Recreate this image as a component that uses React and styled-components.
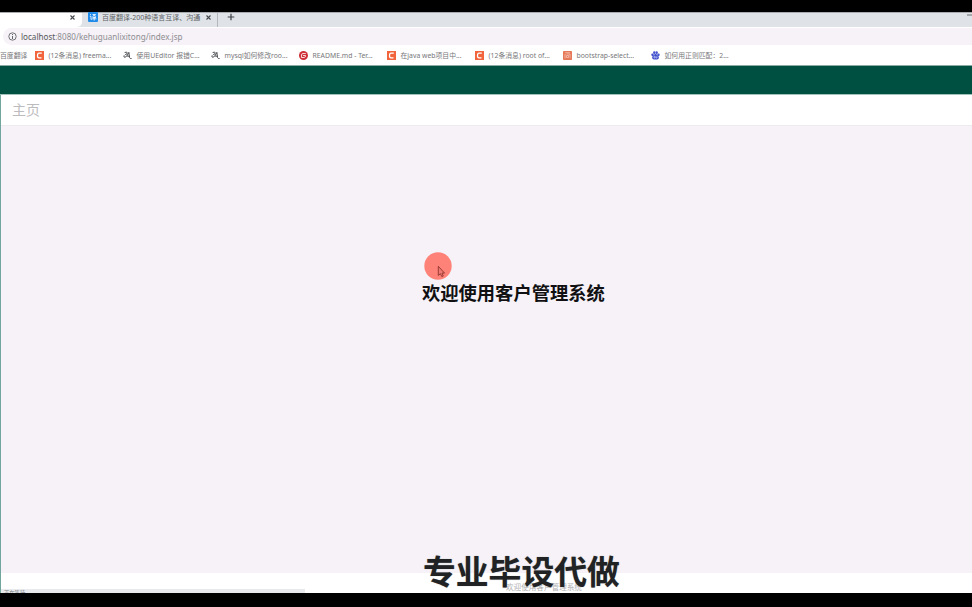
import React from 'react';
import styled, { createGlobalStyle, css } from 'styled-components';

const GlobalStyle = createGlobalStyle`
  body {
    margin: 0;
    background: #000;
    overflow: hidden;
  }

  * {
    box-sizing: border-box;
  }
`;

const Screen = styled.div`
  position: relative;
  display: flex;
  flex-direction: column;
  width: 972px;
  height: 607px;
  padding: 12px 0 14px;
  background: #000;
  overflow: hidden;
  white-space: nowrap;
  font-family: 'Noto Sans', 'Noto Sans CJK SC', sans-serif;
`;

// Browser chrome
const TabStrip = styled.div`
  display: flex;
  flex: none;
  height: 15px;
  background: #dfe3e7;
  border-top: 1px solid #a9acae;
`;

const Tab = styled.div`
  display: flex;
  align-items: center;
  height: 14px;
  padding-bottom: 6px;
  color: #5c6064;
  font-size: 7px;
  line-height: 9px;

  ${({ $active }) => $active ? css`
    width: 82px;
    padding-left: 69px;
    background: #fff;
    border-radius: 0 0 5px 0;
  ` : css`
    width: 136px;
    padding-left: 6px;
    border-right: 1px solid #b4b8bc;
  `}
`;

const TabTitle = styled.span`
  flex: none;
  width: 103px;
  margin-left: 4px;
  overflow: hidden;
`;

const TabIcon = styled.svg`
  flex: none;
  width: ${({ $size }) => $size || 7}px;
  height: ${({ $size }) => $size || 7}px;
`;

const NewTab = styled.div`
  padding: 0 0 0 9px;
  line-height: 0;
`;

const Minimize = styled.div`
  width: 5px;
  height: 2px;
  margin: 1px 0 0 auto;
  background: #a5a8ab;
`;

const AddressRow = styled.div`
  flex: none;
  height: 18px;
  padding: 1px 0 0 3px;
  background: #fff;
`;

const AddressBar = styled.div`
  display: flex;
  align-items: center;
  height: 17px;
  padding-left: 5px;
  background: #f6f2f7;
  border-radius: 9px 0 0 9px;
  color: #8d8d92;
  font-size: 8.1px;
`;

const Url = styled.span`
  margin-left: 4px;
  padding-bottom: 1px;

  b {
    color: #55565a;
    font-weight: 400;
  }
`;

const Bookmarks = styled.div`
  display: flex;
  align-items: center;
  flex: none;
  height: 20px;
  background: #fff;
  color: #77777a;
  font-size: 6.85px;
`;

const Bookmark = styled.div`
  display: flex;
  align-items: center;
  flex: none;
  width: ${({ $width }) => $width || 88}px;

  svg {
    flex: none;
    width: 9px;
    height: 9px;
    margin-right: 4.5px;
  }
`;

// Page inside the browser
const Page = styled.div`
  display: flex;
  flex: 1;
  flex-direction: column;
  min-height: 0;
  border-left: 1px solid #70a69d;
`;

const Banner = styled.header`
  flex: none;
  height: 30px;
  margin-left: -1px;
  background: #005041;
  border-top: 1px solid #8caaa4;
  border-bottom: 1px solid #9fc3bb;
`;

const Crumb = styled.div`
  flex: none;
  height: 31px;
  padding-left: 11px;
  background: #fff;
  border-bottom: 1px solid #ececee;
  color: #bcbcbe;
  font-size: 14px;
  line-height: 30px;
`;

const Content = styled.main`
  flex: 1;
  padding: 153px 0 0 421px;
  background: #f6f2f7;
`;

const Welcome = styled.h1`
  margin: 0;
  color: #101012;
  font-size: 18.3px;
  font-weight: 700;
  line-height: 28px;
`;

const Footer = styled.footer`
  display: flex;
  flex: none;
  align-items: flex-end;
  height: 20px;
  background: #fff;
`;

const Status = styled.div`
  width: 304px;
  height: 4px;
  padding-left: 3px;
  background: #e8eaed;
  color: #777b7e;
  font-size: 5.3px;
  line-height: 8px;
  overflow: hidden;
`;

const Copyright = styled.div`
  margin-left: 201px;
  color: #b0b0b2;
  font-size: 7.6px;
  line-height: 11px;
`;

// Things recorded over the page
const Pointer = styled.svg`
  position: absolute;
  left: 424px;
  top: 252px;
  width: 28px;
  height: 28px;
`;

const Caption = styled.div`
  position: absolute;
  left: 423px;
  top: 549px;
  color: #202224;
  font-size: 32.8px;
  font-weight: 700;
  line-height: 46px;
  text-shadow: 0 0 1px #9a9a9c;
`;

const CloseIcon = () => (
  <TabIcon viewBox="0 0 7 7" $size={7}>
    <path d="M1.5 1.5 5.5 5.5M5.5 1.5 1.5 5.5" stroke="#45494d" strokeWidth="1.1" />
  </TabIcon>
);

const CsdnIcon = () => (
  <svg viewBox="0 0 9 9">
    <rect width="9" height="9" fill="#f2653c" />
    <path d="M6.8 2.2H4Q2.6 2.2 2.5 4.5T4 6.9H6.5" fill="none" stroke="#fff" strokeWidth="1.2" />
  </svg>
);

// An open loop on the left running into an "A" shaped stroke
const KnotIcon = () => (
  <svg viewBox="0 0 9 9">
    <path d="M1.6 1.6Q4.2.3 4.2 1.9T2.2 3.6M1.2 4.3Q.2 6.4 2 6.3T5.9 1.3L6.5 6.6Q7 7.8 8.6 7.5M4.2 5.2H7" fill="none" stroke="#4d5053" strokeWidth="1" />
  </svg>
);

const GiteeIcon = () => (
  <svg viewBox="0 0 9 9">
    <circle cx="4.5" cy="4.5" r="4.5" fill="#cf3039" />
    <path d="M6.8 2.5H4Q2.5 2.5 2.5 4V6.5H5.4Q6.5 6.3 6.5 4.5H4" fill="none" stroke="#fff" strokeWidth=".8" />
  </svg>
);

const JianshuIcon = () => (
  <svg viewBox="0 0 9 9">
    <rect width="9" height="9" rx=".7" fill="#e67757" />
    <path d="M2 1.7H7M2 3V7.5M3.5 3H7V7.2M3.5 4.5H5.5V6.5H3.5Z" fill="none" stroke="#f9d9ce" strokeWidth=".6" />
  </svg>
);

const BaiduIcon = () => (
  <svg viewBox="0 0 9 9" fill="#4252ce">
    <ellipse cx="1.5" cy="3.8" rx="1.2" ry="1.4" />
    <ellipse cx="3.3" cy="1.7" rx="1.2" ry="1.4" />
    <ellipse cx="5.7" cy="1.7" rx="1.2" ry="1.4" />
    <ellipse cx="7.5" cy="3.8" rx="1.2" ry="1.4" />
    <path d="M4.5 2.7Q6 3 7.9 6.1 8.2 8.6 6 8.5H3Q.8 8.6 1.1 6.1 3 3 4.5 2.7Z" />
    <path d="M3 5.3H4V7H3ZM5 5.3V7H6V5.3" fill="none" stroke="#dfe2fa" strokeWidth=".5" />
  </svg>
);

const bookmarks = [
  { icon: CsdnIcon, label: '(12条消息) freema...' },
  { icon: KnotIcon, label: '使用UEditor 报错C...' },
  { icon: KnotIcon, label: 'mysql如何修改roo...' },
  { icon: GiteeIcon, label: 'README.md - Ter...' },
  { icon: CsdnIcon, label: '在java web项目中...' },
  { icon: CsdnIcon, label: '(12条消息) root of...' },
  { icon: JianshuIcon, label: 'bootstrap-select...' },
  { icon: BaiduIcon, label: '如何用正则匹配：2...' },
];

const App = () => (
  <>
    <GlobalStyle />
    <Screen>
      <TabStrip>
        <Tab $active><CloseIcon /></Tab>
        <Tab>
          <TabIcon viewBox="0 0 10 10" $size={10}>
            <rect width="10" height="10" rx="1" fill="#218be9" />
            <path d="M2 2.2 3 3M1.8 4.3H3V7.5L4 6.8M4.5 2.5H7.5L4.5 4.5M5.3 3 8 4.5M4.5 5.5H8M4.2 6.8H8.4M6.2 4.7V8.5" fill="none" stroke="#fff" strokeWidth=".8" />
          </TabIcon>
          <TabTitle>百度翻译-200种语言互译、沟通</TabTitle>
          <CloseIcon />
        </Tab>
        <NewTab>
          <TabIcon viewBox="0 0 8 8" $size={8}>
            <path d="M4 .7V7.3M.7 4H7.3" stroke="#3e4246" strokeWidth="1.2" />
          </TabIcon>
        </NewTab>
        <Minimize />
      </TabStrip>
      <AddressRow>
        <AddressBar>
          <TabIcon viewBox="0 0 9 9" $size={9}>
            <circle cx="4.5" cy="4.5" r="3.7" fill="none" stroke="#626569" strokeWidth=".9" />
            <path d="M4.5 2V3M4.5 3.9V7" stroke="#626569" strokeWidth="1" />
          </TabIcon>
          <Url><b>localhost</b>:8080/kehuguanlixitong/index.jsp</Url>
        </AddressBar>
      </AddressRow>
      <Bookmarks>
        <Bookmark $width={35}>百度翻译</Bookmark>
        {bookmarks.map(({ icon: Icon, label }) => (
          <Bookmark key={label}><Icon />{label}</Bookmark>
        ))}
      </Bookmarks>
      <Page>
        <Banner />
        <Crumb>主页</Crumb>
        <Content>
          <Welcome>欢迎使用客户管理系统</Welcome>
        </Content>
        <Footer>
          <Status>正在等待</Status>
          <Copyright>欢迎使用客户管理系统</Copyright>
        </Footer>
      </Page>
      <Pointer viewBox="0 0 28 28">
        <circle cx="14" cy="14" r="13.7" fill="#ff8279" />
        <path d="M14.3 14.3V23.5L16.4 21.7 17.8 24.6 19.3 24 18 21.1H20.6Z" fill="#ef7971" stroke="#8e342f" strokeWidth=".9" />
      </Pointer>
      <Caption>专业毕设代做</Caption>
    </Screen>
  </>
);

export default App;
